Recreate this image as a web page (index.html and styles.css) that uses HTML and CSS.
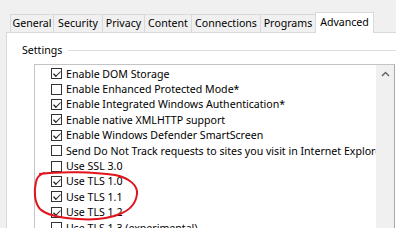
FILE: index.html
```html
<!DOCTYPE html>
<html lang="en">
<head>
    <meta charset="UTF-8">
    <title>Internet Options - Advanced</title>
    <link rel="stylesheet" href="styles.css">
</head>
<body>
    <div class="tabs">
        <div class="tab w-general">General</div>
        <div class="tab w-security">Security</div>
        <div class="tab w-privacy">Privacy</div>
        <div class="tab w-content">Content</div>
        <div class="tab w-connections">Connections</div>
        <div class="tab w-programs">Programs</div>
        <div class="tab tab-active w-advanced">Advanced</div>
    </div>

    <div class="panel">
        <div class="group-title">
            <span>Settings</span>
            <div class="group-line"></div>
        </div>

        <div class="listbox">
            <ul class="options">
                <li><span class="check on"></span>Enable DOM Storage</li>
                <li><span class="check"></span>Enable Enhanced Protected Mode*</li>
                <li><span class="check on"></span>Enable Integrated Windows Authentication*</li>
                <li><span class="check on"></span>Enable native XMLHTTP support</li>
                <li><span class="check on"></span>Enable Windows Defender SmartScreen</li>
                <li><span class="check"></span>Send Do Not Track requests to sites you visit in Internet Explorer</li>
                <li><span class="check"></span>Use SSL 3.0</li>
                <li><span class="check on"></span>Use TLS 1.0</li>
                <li><span class="check on"></span>Use TLS 1.1</li>
                <li><span class="check on"></span>Use TLS 1.2</li>
                <li><span class="check"></span>Use TLS 1.3 (experimental)</li>
            </ul>
            <div class="scrollbar">
                <svg class="arrow-up" width="9" height="6" viewBox="0 0 9 6">
                    <path d="M1 5 L4.5 1.5 L8 5" fill="none" stroke="#606060" stroke-width="1.4"/>
                </svg>
            </div>
        </div>
    </div>

    <!-- hand drawn red marker round the TLS rows -->
    <svg class="marker" width="396" height="228" viewBox="0 0 396 228">
        <path d="M40 174 C60 171 95 172 115 175 C130 178 138 186 137 194 C136 203 130 210 120 214 C108 219 92 220 78 219 C62 218 47 216 40 209 C34 202 34 190 36 182 C37 177 39 175 44 173"
              fill="none" stroke="#e2131b" stroke-width="2" stroke-linecap="round"/>
    </svg>
</body>
</html>
```

FILE: styles.css
```css
body {
    margin: 0;
    background: #f0f0f0;
    font-family: "Noto Sans", "Open Sans", sans-serif;
    font-size: 10.6px;
    color: #000;
    height: 228px;
    overflow: hidden;
    position: relative;
}

/* tabs */
.tabs {
    display: flex;
    padding-left: 10px;
    padding-top: 14px;
    height: 18px;
    position: relative;
    z-index: 2;
}

.tab {
    box-sizing: border-box;
    height: 19px;
    border: 1px solid #d9d9d9;
    border-right: none;
    background: #f0f0f0;
    text-align: center;
    line-height: 16px;
}

.tab-active {
    background: #fff;
    height: 21px;
    margin-top: -2px;
    border-right: 1px solid #d9d9d9;
    border-bottom: none;
    line-height: 18px;
}

.w-general { width: 43px; }
.w-security { width: 49px; }
.w-privacy { width: 42px; }
.w-content { width: 47px; }
.w-connections { width: 69px; }
.w-programs { width: 55px; }
.w-advanced { width: 59px; }

/* panel */
.panel {
    margin-left: 6px;
    background: #fff;
    border-left: 1px solid #d9d9d9;
    border-top: 1px solid #d9d9d9;
    height: 300px;
}

.group-title {
    display: flex;
    align-items: center;
    padding-left: 15px;
    margin-top: 9px;
    height: 16px;
}

.group-line {
    flex: 1;
    border-top: 1px solid #dcdcdc;
    margin-left: 6px;
}

.listbox {
    display: flex;
    margin-left: 27px;
    margin-top: 6px;
    width: 359px;
    height: 200px;
    border: 1px solid #c4c4c4;
    border-right-color: #a8a8a8;
}

.options {
    list-style: none;
    margin: 0;
    padding: 1px 0 0 16px;
    flex: 1;
    overflow: hidden;
}

.options li {
    display: flex;
    align-items: center;
    height: 15.4px;
    white-space: nowrap;
}

.check {
    box-sizing: border-box;
    width: 11px;
    height: 11px;
    border: 1px solid #333;
    background: #fff;
    margin-right: 4px;
    flex-shrink: 0;
    position: relative;
}

.check.on::after {
    content: "";
    position: absolute;
    left: 2px;
    top: 0px;
    width: 5px;
    height: 3px;
    border-left: 1px solid #222;
    border-bottom: 1px solid #222;
    transform: translate(0, 2px) rotate(-45deg) scaleX(1.2);
}

.scrollbar {
    width: 18px;
    background: #f0f0f0;
    flex-shrink: 0;
    text-align: center;
}

.arrow-up {
    margin-top: 6px;
}

.marker {
    position: absolute;
    left: 0;
    top: 0;
    z-index: 5;
}
```
